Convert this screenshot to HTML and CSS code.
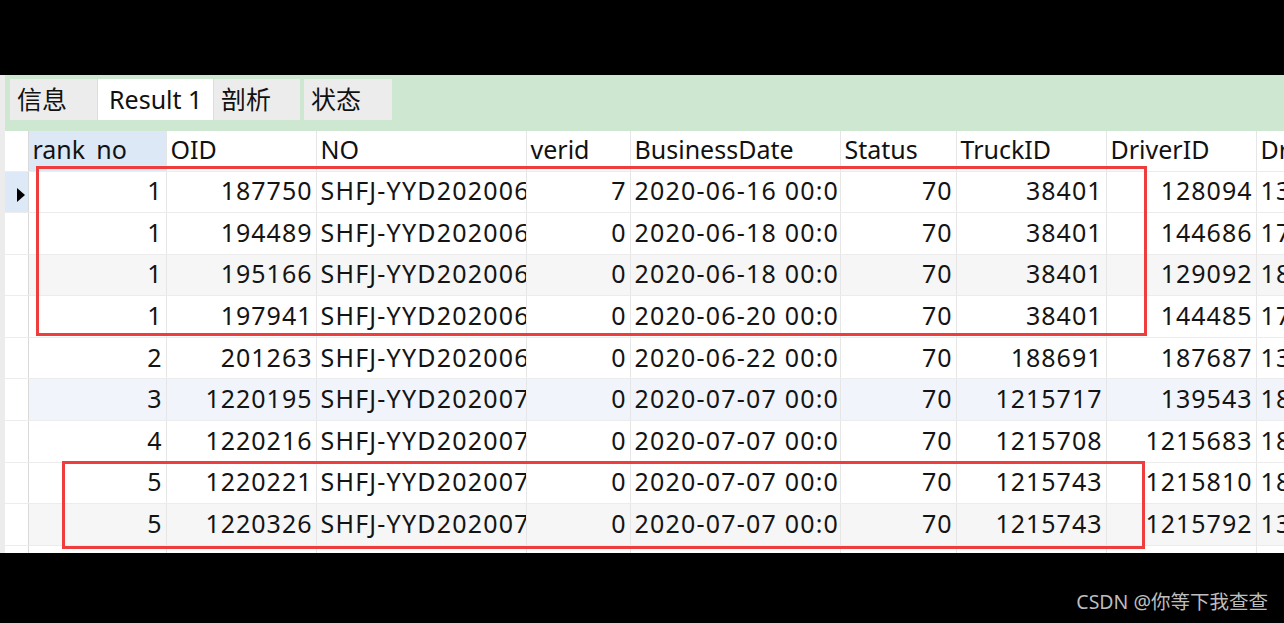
FILE: index.html
```html
<!DOCTYPE html>
<html lang="zh">
<head>
<meta charset="utf-8">
<title>Result 1</title>
<link rel="stylesheet" href="styles.css">
</head>
<body>
<div class="screen">
  <div class="app">
    <div class="tabbar">
      <div class="tab">信息</div>
      <div class="tab active">Result 1</div>
      <div class="tab">剖析</div>
      <div class="tab tab-gap">状态</div>
    </div>
    <div class="grid-wrap">
      <table class="grid">
        <colgroup>
          <col class="c-rh"><col class="c-rank"><col class="c-oid"><col class="c-no"><col class="c-verid"><col class="c-date"><col class="c-status"><col class="c-truck"><col class="c-driver"><col class="c-dr">
        </colgroup>
        <thead>
          <tr class="head">
            <th class="rh"></th><th class="sorted"><span class="hl">rank_no</span></th><th>OID</th><th>NO</th><th>verid</th><th>BusinessDate</th><th>Status</th><th>TruckID</th><th>DriverID</th><th>Dr</th>
          </tr>
        </thead>
        <tbody>
          <tr><td class="rh current"><span class="arrow"></span></td><td class="n">1</td><td class="n">187750</td><td class="t">SHFJ-YYD202006</td><td class="n">7</td><td class="t">2020-06-16 00:00</td><td class="n">70</td><td class="n">38401</td><td class="n">128094</td><td class="t">13</td></tr>
          <tr><td class="rh"></td><td class="n">1</td><td class="n">194489</td><td class="t">SHFJ-YYD202006</td><td class="n">0</td><td class="t">2020-06-18 00:00</td><td class="n">70</td><td class="n">38401</td><td class="n">144686</td><td class="t">17</td></tr>
          <tr class="alt"><td class="rh"></td><td class="n">1</td><td class="n">195166</td><td class="t">SHFJ-YYD202006</td><td class="n">0</td><td class="t">2020-06-18 00:00</td><td class="n">70</td><td class="n">38401</td><td class="n">129092</td><td class="t">18</td></tr>
          <tr><td class="rh"></td><td class="n">1</td><td class="n">197941</td><td class="t">SHFJ-YYD202006</td><td class="n">0</td><td class="t">2020-06-20 00:00</td><td class="n">70</td><td class="n">38401</td><td class="n">144485</td><td class="t">17</td></tr>
          <tr><td class="rh"></td><td class="n">2</td><td class="n">201263</td><td class="t">SHFJ-YYD202006</td><td class="n">0</td><td class="t">2020-06-22 00:00</td><td class="n">70</td><td class="n">188691</td><td class="n">187687</td><td class="t">13</td></tr>
          <tr class="hover"><td class="rh"></td><td class="n">3</td><td class="n">1220195</td><td class="t">SHFJ-YYD202007</td><td class="n">0</td><td class="t">2020-07-07 00:00</td><td class="n">70</td><td class="n">1215717</td><td class="n">139543</td><td class="t">18</td></tr>
          <tr><td class="rh"></td><td class="n">4</td><td class="n">1220216</td><td class="t">SHFJ-YYD202007</td><td class="n">0</td><td class="t">2020-07-07 00:00</td><td class="n">70</td><td class="n">1215708</td><td class="n">1215683</td><td class="t">18</td></tr>
          <tr><td class="rh"></td><td class="n">5</td><td class="n">1220221</td><td class="t">SHFJ-YYD202007</td><td class="n">0</td><td class="t">2020-07-07 00:00</td><td class="n">70</td><td class="n">1215743</td><td class="n">1215810</td><td class="t">18</td></tr>
          <tr class="alt"><td class="rh"></td><td class="n">5</td><td class="n">1220326</td><td class="t">SHFJ-YYD202007</td><td class="n">0</td><td class="t">2020-07-07 00:00</td><td class="n">70</td><td class="n">1215743</td><td class="n">1215792</td><td class="t">13</td></tr>
          <tr><td class="rh"></td><td></td><td></td><td></td><td></td><td></td><td></td><td></td><td></td><td></td></tr>
        </tbody>
      </table>
      <div class="mark mark-a"></div>
      <div class="mark mark-b"></div>
    </div>
  </div>
  <div class="footer">CSDN @你等下我查查</div>
</div>
</body>
</html>
```

FILE: styles.css
```css
html, body {
  margin: 0;
  padding: 0;
  background: #000;
}

.screen {
  width: 1284px;
  height: 623px;
  overflow: hidden;
  display: flex;
  flex-direction: column;
  font-family: "Noto Sans", "Noto Sans CJK SC", sans-serif;
}

.app {
  margin-top: 75px;
  height: 478px;
  background: #ececec;
  padding-left: 5px;
  display: flex;
  flex-direction: column;
  overflow: hidden;
}

.tabbar {
  height: 56px;
  flex: none;
  box-sizing: border-box;
  padding: 4px 0 0 5px;
  background: #cde7d0;
  display: flex;
  align-items: flex-start;
  gap: 1px;
}

.tab {
  height: 41px;
  line-height: 41px;
  box-sizing: border-box;
  padding-left: 7px;
  background: #ececec;
  color: #111;
  font-size: 25px;
  font-family: "Noto Sans", "Noto Sans CJK SC", sans-serif;
}

.tab:nth-child(1) { width: 87px; }
.tab:nth-child(2) { width: 115px; padding-left: 11px; }
.tab:nth-child(3) { width: 86px; }
.tab:nth-child(4) { width: 88px; }
.tab-gap { margin-left: 3px; }

.tab.active {
  background: #fff;
}

.grid-wrap {
  position: relative;
  flex: 1;
  overflow: hidden;
  background: #fff;
}

.grid {
  border-collapse: collapse;
  table-layout: fixed;
  width: 1401px;
  font-size: 25px;
  color: #141414;
}

.c-rh { width: 23px; }
.c-rank { width: 138px; }
.c-oid { width: 150px; }
.c-no { width: 210px; }
.c-verid { width: 104px; }
.c-date { width: 210px; }
.c-status { width: 116px; }
.c-truck { width: 150px; }
.c-driver { width: 150px; }
.c-dr { width: 150px; }

.grid th,
.grid td {
  padding: 0 4px;
  white-space: nowrap;
  overflow: hidden;
  text-overflow: clip;
  border-right: 1px solid #e6e6e6;
  border-bottom: 1px solid #ececec;
  line-height: 30px;
}

.grid th {
  height: 40px;
  font-weight: normal;
  text-align: left;
  color: #111;
  vertical-align: top;
  padding-top: 3px;
  box-sizing: border-box;
}

.hl {
  display: block;
  height: 26px;
  overflow: hidden;
}

.grid th.sorted {
  background: #dce8f5;
}

.grid td {
  height: 41.6px;
  box-sizing: border-box;
  padding-bottom: 3px;
}

.grid td.n {
  text-align: right;
  letter-spacing: 1px;
  padding-right: 3px;
}

.grid td.t {
  letter-spacing: 1.2px;
}

.grid .rh {
  padding: 0;
  background: #fff;
  border-right: 1px solid #d9d9d9;
}

.grid td.rh.current {
  background: #dde9f6;
  text-align: left;
  padding-left: 12px;
  padding-bottom: 0;
}

.arrow {
  display: inline-block;
  width: 0;
  height: 0;
  border-top: 7px solid transparent;
  border-bottom: 7px solid transparent;
  border-left: 8px solid #000;
  vertical-align: middle;
}

.grid tr.alt td { background: #f6f6f6; }
.grid tr.hover td { background: #f1f5fb; }
.grid tr.alt td.rh,
.grid tr.hover td.rh { background: #fff; }

.mark {
  position: absolute;
  box-sizing: border-box;
  border: 3px solid #ee3d3d;
}

.mark-a {
  left: 31px;
  top: 35px;
  width: 1111px;
  height: 170px;
}

.mark-b {
  left: 57px;
  top: 330px;
  width: 1083px;
  height: 88px;
}

.footer {
  flex: 1;
  box-sizing: border-box;
  padding: 36px 16px 0 0;
  text-align: right;
  color: #bdbdbd;
  font-size: 19.5px;
  line-height: 26px;
  font-family: "Noto Sans", "Noto Sans CJK SC", sans-serif;
}
```
